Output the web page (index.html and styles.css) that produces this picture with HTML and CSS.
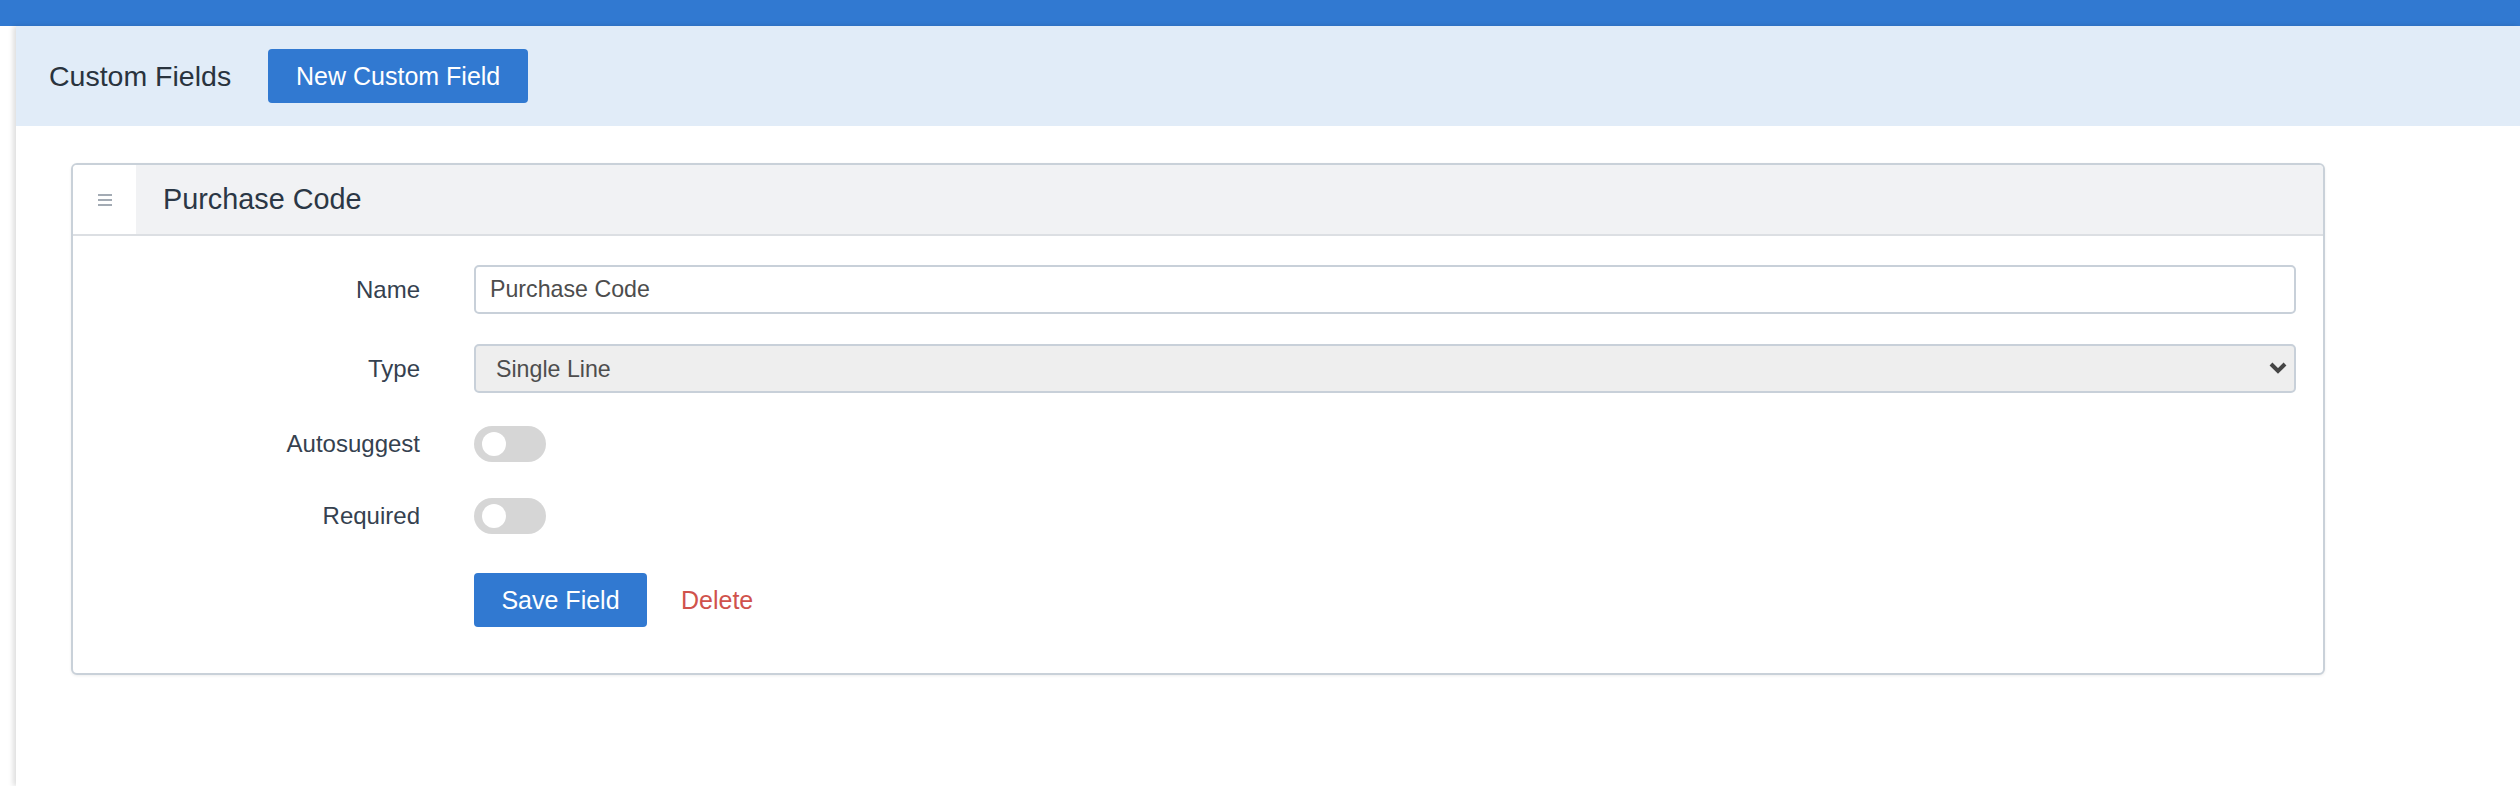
FILE: index.html
```html
<!DOCTYPE html>
<html lang="en">
<head>
<meta charset="utf-8">
<title>Custom Fields</title>
<link rel="stylesheet" href="styles.css">
</head>
<body>
<div class="topbar"></div>
<div class="layout">
  <div class="edge"></div>
  <main class="main">
    <header class="page-header">
      <h1 class="page-title">Custom Fields</h1>
      <button class="btn btn-primary btn-new" type="button">New Custom Field</button>
    </header>
    <section class="content">
      <div class="card">
        <div class="card-header">
          <div class="handle">
            <svg width="14" height="14" viewBox="0 0 14 14" aria-hidden="true">
              <rect x="0" y="1" width="14" height="2" fill="#a3abb4"/>
              <rect x="0" y="6" width="14" height="2" fill="#a3abb4"/>
              <rect x="0" y="11" width="14" height="2" fill="#a3abb4"/>
            </svg>
          </div>
          <div class="card-title">Purchase Code</div>
        </div>
        <div class="card-body">
          <div class="row">
            <label class="label">Name</label>
            <div class="control"><input class="input" type="text" value="Purchase Code"></div>
          </div>
          <div class="row">
            <label class="label">Type</label>
            <div class="control select-wrap">
              <select class="select"><option>Single Line</option></select>
              <svg class="chevron" width="18" height="12" viewBox="0 0 18 12" aria-hidden="true">
                <path d="M2 2 L9 9 L16 2" fill="none" stroke="#454545" stroke-width="4"/>
              </svg>
            </div>
          </div>
          <div class="row row-toggle">
            <label class="label">Autosuggest</label>
            <div class="control"><span class="toggle"><span class="knob"></span></span></div>
          </div>
          <div class="row row-toggle">
            <label class="label">Required</label>
            <div class="control"><span class="toggle"><span class="knob"></span></span></div>
          </div>
          <div class="row row-actions">
            <span class="label"></span>
            <div class="control actions">
              <button class="btn btn-primary btn-save" type="button">Save Field</button>
              <a class="delete" href="#">Delete</a>
            </div>
          </div>
        </div>
      </div>
    </section>
  </main>
</div>
</body>
</html>
```

FILE: styles.css
```css
* { box-sizing: border-box; }
html, body {
  margin: 0;
  padding: 0;
  background: #ffffff;
  font-family: "Liberation Sans", Arial, sans-serif;
  color: #34404d;
}
.topbar {
  height: 26px;
  background: #3179d1;
}
.layout {
  display: flex;
  min-height: 760px;
}
.edge {
  width: 16px;
  flex: 0 0 16px;
  background: #ffffff;
}
.main {
  flex: 1;
  background: #ffffff;
  box-shadow: -3px 0 5px rgba(0, 0, 0, 0.13);
}
.page-header {
  height: 100px;
  background: #e1ecf8;
  display: flex;
  align-items: center;
  padding-left: 33px;
  gap: 37px;
}
.page-title {
  margin: 0;
  font-size: 28.5px;
  font-weight: normal;
  color: #29333e;
}
.btn {
  font-family: "Liberation Sans", Arial, sans-serif;
  border: none;
  border-radius: 4px;
  cursor: pointer;
  padding: 0;
}
.btn-primary {
  background: #3179d1;
  color: #ffffff;
  font-size: 25px;
}
.btn-new {
  width: 260px;
  height: 54px;
}
.content {
  padding: 37px 195px 0 55px;
}
.card {
  border: 2px solid #c9d1d9;
  border-radius: 6px;
  background: #ffffff;
  box-shadow: 0 1px 3px rgba(0, 0, 0, 0.07);
  overflow: hidden;
}
.card-header {
  display: flex;
  height: 71px;
  border-bottom: 2px solid #dcdfe3;
}
.handle {
  width: 63px;
  flex: 0 0 63px;
  display: flex;
  align-items: center;
  justify-content: center;
  background: #ffffff;
}
.card-title {
  flex: 1;
  background: #f1f2f4;
  display: flex;
  align-items: center;
  padding-left: 27px;
  font-size: 28.8px;
  color: #2b3745;
}
.card-body {
  padding: 29px 27px 46px 0;
}
.row {
  display: flex;
  align-items: center;
  gap: 54px;
  margin-bottom: 30px;
}
.row-toggle {
  min-height: 42px;
}
.row-actions {
  padding-top: 6px;
  margin-bottom: 0;
}
.label {
  width: 347px;
  flex: 0 0 347px;
  text-align: right;
  font-size: 24px;
  color: #35414f;
}
.control {
  flex: 1;
}
.input, .select {
  display: block;
  width: 100%;
  height: 49px;
  border: 2px solid #c8d0d9;
  border-radius: 5px;
  font-family: "Liberation Sans", Arial, sans-serif;
  font-size: 23.2px;
  color: #4d4d4d;
  outline: none;
}
.input {
  background: #ffffff;
  padding: 0 14px;
}
.select-wrap {
  position: relative;
}
.select {
  appearance: none;
  -webkit-appearance: none;
  background: #eeeeee;
  padding: 0 20px;
}
.chevron {
  position: absolute;
  right: 9px;
  top: 18px;
  pointer-events: none;
}
.toggle {
  display: block;
  position: relative;
  width: 72px;
  height: 36px;
  border-radius: 18px;
  background: #d6d6d6;
}
.knob {
  position: absolute;
  left: 8px;
  top: 6px;
  width: 24px;
  height: 24px;
  border-radius: 50%;
  background: #ffffff;
}
.actions {
  display: flex;
  align-items: center;
  gap: 34px;
}
.btn-save {
  width: 173px;
  height: 54px;
}
.delete {
  font-size: 25px;
  color: #d0524c;
  text-decoration: none;
}
```
